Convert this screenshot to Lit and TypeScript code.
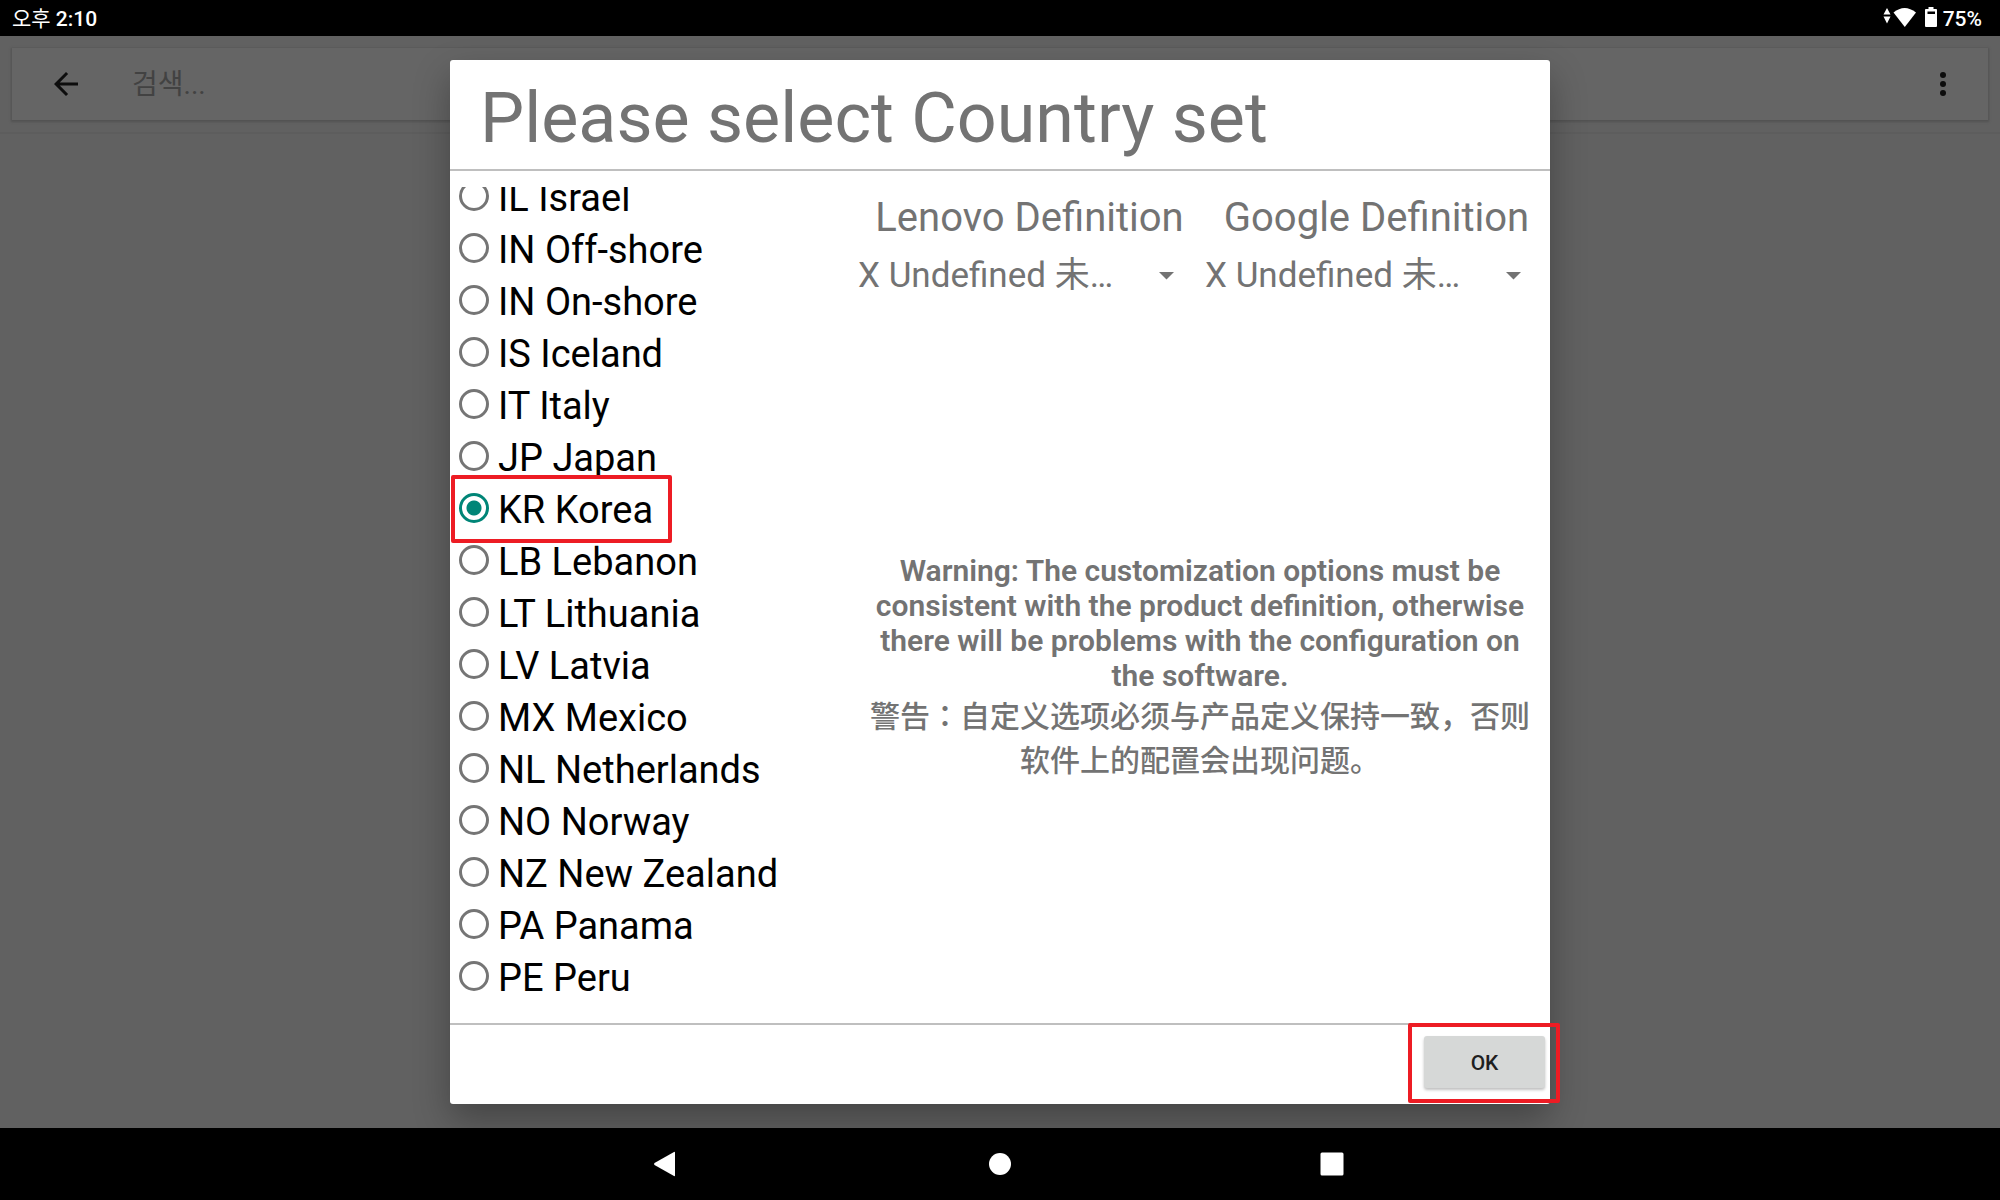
import { LitElement, html, css, svg } from "lit";
import { customElement, state } from "lit/decorators.js";

const COUNTRIES: [string, string][] = [
  ["IL", "Israel"],
  ["IN", "Off-shore"],
  ["IN", "On-shore"],
  ["IS", "Iceland"],
  ["IT", "Italy"],
  ["JP", "Japan"],
  ["KR", "Korea"],
  ["LB", "Lebanon"],
  ["LT", "Lithuania"],
  ["LV", "Latvia"],
  ["MX", "Mexico"],
  ["NL", "Netherlands"],
  ["NO", "Norway"],
  ["NZ", "New Zealand"],
  ["PA", "Panama"],
  ["PE", "Peru"],
];

@customElement("status-bar")
class StatusBar extends LitElement {
  static styles = css`
    :host {
      display: flex;
      align-items: center;
      justify-content: space-between;
      padding: 0 18px 0 12px;
      background: #000;
      color: #fff;
      font: 500 21px/34px Roboto, "Noto Sans CJK KR", sans-serif;
    }
    .clock,
    .level {
      padding-top: 2px;
    }
    .period {
      font-weight: 400;
    }
    .right {
      display: flex;
      align-items: center;
    }
    .icons {
      display: block;
    }
  `;
  render() {
    return html`
      <span class="clock"><span class="period">오후</span> 2:10</span>
      <div class="right">
        <svg class="icons" width="60" height="36" viewBox="0 0 60 36" fill="#fff" aria-hidden="true">
          ${svg`
            <path d="M0.500 14.500L4 8L7.500 14.500Z M0.500 16.500L4 23.500L7.500 16.500Z" />
            <path d="M10.500 12.500Q21.500 3.500 33 12.500L21.800 27Z" />
            <path d="M45.500 7H50.500V9H53.200Q54 9 54 10V26Q54 27 53 27H43Q42 27 42 26V10Q42 9 42.800 9H45.500Z" />
            <path fill="#000" d="M44.500 11.500H52V14H44.500Z" />
          `}
        </svg>
        <span class="level">75%</span>
      </div>
    `;
  }
}

@customElement("nav-bar")
class NavBar extends LitElement {
  static styles = css`
    :host {
      display: flex;
      justify-content: center;
      gap: 260px;
      background: #000;
    }
    .key {
      display: grid;
      place-items: center;
      width: 72px;
      padding: 0;
      border: 0;
      background: none;
    }
  `;
  render() {
    return html`
      <button class="key" aria-label="Back">
        <svg width="36" height="36" viewBox="0 0 36 36"><path fill="#fff" d="M25 6.500V29.500Q25 30.500 24 30L4.500 19Q3.500 18 4.500 17L24 6Q25 5.500 25 6.500Z" /></svg>
      </button>
      <button class="key" aria-label="Home">
        <svg width="36" height="36" viewBox="0 0 36 36"><circle cx="18" cy="18" r="11" fill="#fff" /></svg>
      </button>
      <button class="key" aria-label="Recents">
        <svg width="36" height="36" viewBox="0 0 36 36"><rect x="6.500" y="6.500" width="23" height="23" rx="1.500" fill="#fff" /></svg>
      </button>
    `;
  }
}

@customElement("search-page")
class SearchPage extends LitElement {
  static styles = css`
    :host {
      display: block;
      background: #616161;
    }
    .top {
      padding: 12px 12px;
      border-bottom: 2px solid #5d5d5d;
    }
    .card {
      display: flex;
      align-items: center;
      height: 72px;
      padding: 0 27px 0 36px;
      background: #656565;
      box-shadow: 0 1px 2px 1px #535353;
    }
    .icon {
      display: block;
      padding: 0;
      border: 0;
      background: none;
    }
    .icon svg {
      display: block;
    }
    .field {
      flex: 1;
      min-width: 0;
      margin: 0 24px 0 48px;
      padding: 2px 0 0;
      border: 0;
      outline: 0;
      background: none;
      color: #424242;
      font: 28px/36px Roboto, "Noto Sans CJK KR", sans-serif;
    }
    .field::placeholder {
      color: #424242;
      opacity: 1;
    }
  `;
  render() {
    return html`
      <div class="top">
        <div class="card">
          <button class="icon" aria-label="뒤로">
            <svg width="36" height="36" viewBox="0 0 24 24" fill="#0d0d0d"><path d="M20 11H7.830l5.590-5.590L12 4l-8 8 8 8 1.410-1.410L7.830 13H20v-2z" /></svg>
          </button>
          <input class="field" type="text" placeholder="검색..." aria-label="검색" />
          <button class="icon" aria-label="옵션 더보기">
            <svg width="36" height="36" viewBox="0 0 24 24" fill="#0d0d0d"><circle cx="12" cy="6" r="2" /><circle cx="12" cy="12" r="2" /><circle cx="12" cy="18" r="2" /></svg>
          </button>
        </div>
      </div>
    `;
  }
}

@customElement("country-dialog")
class CountryDialog extends LitElement {
  @state() private selected = 6;

  static styles = css`
    :host {
      display: grid;
      grid-template-rows: 111px minmax(0, 1fr) 81px;
      border-radius: 3px;
      background: #fff;
      color: #737373;
      font-family: Roboto, "Noto Sans CJK KR", sans-serif;
      box-shadow: 0 16px 36px rgba(0, 0, 0, 0.3);
    }
    .title {
      margin: 0;
      padding: 0 30px;
      border-bottom: 2px solid #bfbfbf;
      font-size: 70px;
      font-weight: 400;
      line-height: 116px;
      height: 109px;
    }
    .body {
      display: grid;
      grid-template-columns: 406px minmax(0, 1fr);
      min-height: 0;
      padding: 16px 0 19px;
    }
    .list {
      display: flex;
      flex-direction: column;
      justify-content: flex-end;
      overflow: hidden;
      min-height: 0;
      margin: 0;
      padding: 0;
      border: 0;
    }
    .row {
      position: relative;
      display: flex;
      flex: none;
      align-items: center;
      gap: 9px;
      padding-left: 9px;
      color: #000;
      font-size: 38px;
      line-height: 52px;
    }
    .radio {
      flex: none;
      box-sizing: border-box;
      appearance: none;
      width: 30px;
      height: 30px;
      margin: 0 0 4px;
      border: 3px solid #757575;
      border-radius: 50%;
      background: #fff;
    }
    .radio:checked {
      border-color: #008577;
      background: radial-gradient(circle, #008577 7px, #fff 8px);
    }
    .mark {
      position: absolute;
      box-sizing: border-box;
      border: 4px solid #ed1c24;
      border-radius: 2px;
      pointer-events: none;
    }
    .mark-row {
      top: -9px;
      bottom: -7px;
      left: 1px;
      width: 221px;
      z-index: 1;
    }
    .mark-ok {
      top: -13px;
      bottom: -15px;
      left: -16px;
      right: -15px;
    }
    .side {
      min-width: 0;
    }
    .defs {
      display: grid;
      grid-template-columns: 1fr 1fr;
      padding-top: 8px;
    }
    .def {
      display: grid;
      gap: 14px;
      min-width: 0;
    }
    .caption {
      text-align: center;
      font-size: 40px;
      line-height: 46px;
      white-space: nowrap;
    }
    .pick {
      position: relative;
      display: grid;
      margin-right: 24px;
    }
    .select {
      appearance: none;
      min-width: 0;
      width: 100%;
      margin: 0;
      padding: 0 62px 0 2px;
      border: 0;
      background: none;
      color: inherit;
      font: 35px/42px Roboto, "Noto Sans CJK KR", sans-serif;
      text-overflow: ellipsis;
      white-space: nowrap;
      overflow: hidden;
    }
    .caret {
      position: absolute;
      right: 5px;
      top: 17px;
      pointer-events: none;
    }
    .warning {
      margin: 256px 18px 0 12px;
      text-align: center;
      font-size: 30px;
      font-weight: 600;
    }
    .text {
      margin: 0;
      line-height: 35px;
    }
    .text-zh {
      margin: 2px 0 0;
      font-weight: 500;
      line-height: 44px;
    }
    .footer {
      display: flex;
      justify-content: flex-end;
      align-items: flex-start;
      padding: 11px 5px 0;
      border-top: 2px solid #bfbfbf;
    }
    .action {
      position: relative;
    }
    .ok {
      display: block;
      width: 121px;
      height: 52px;
      padding: 2px 0 0;
      border: 0;
      border-radius: 3px;
      background: #d6d8d7;
      color: #1f1f1f;
      font: 500 21px/50px Roboto, sans-serif;
      box-shadow: 0 2px 3px rgba(0, 0, 0, 0.25);
    }
  `;

  private picker(id: string, caption: string) {
    return html`
      <div class="def">
        <label class="caption" for=${id}>${caption}</label>
        <div class="pick">
          <select class="select" id=${id}>
            <option>X Undefined 未定义</option>
          </select>
          <svg class="caret" width="15" height="8" viewBox="0 0 15 8" aria-hidden="true"><path fill="#737373" d="M0 0H15L7.500 7.500Z" /></svg>
        </div>
      </div>
    `;
  }

  render() {
    return html`
      <h1 class="title">Please select Country set</h1>
      <div class="body">
        <fieldset class="list" aria-label="Country">
          ${COUNTRIES.map(
            ([code, name], i) => html`
              <label class="row">
                <input
                  class="radio"
                  type="radio"
                  name="country"
                  .checked=${i === this.selected}
                  @change=${() => (this.selected = i)}
                />
                <span>${code} ${name}</span>
                ${i === 6 ? html`<span class="mark mark-row"></span>` : null}
              </label>
            `,
          )}
        </fieldset>
        <div class="side">
          <div class="defs">
            ${this.picker("lenovo", "Lenovo Definition")} ${this.picker("google", "Google Definition")}
          </div>
          <div class="warning">
            <p class="text">
              Warning: The customization options must be consistent with the product definition, otherwise
              there will be problems with the configuration on the software.
            </p>
            <p class="text-zh">警告：自定义选项必须与产品定义保持一致，否则软件上的配置会出现问题。</p>
          </div>
        </div>
      </div>
      <div class="footer">
        <div class="action">
          <button class="ok">OK</button>
          <span class="mark mark-ok"></span>
        </div>
      </div>
    `;
  }
}

@customElement("app-root")
class AppRoot extends LitElement {
  static styles = css`
    :host {
      display: grid;
      grid-template-rows: 36px minmax(0, 1fr) 72px;
      height: 100vh;
    }
    .stage {
      position: relative;
      display: grid;
      overflow: hidden;
    }
    .dialog {
      position: absolute;
      inset: 24px 22.5%;
    }
  `;
  render() {
    return html`
      <status-bar></status-bar>
      <main class="stage">
        <search-page></search-page>
        <country-dialog class="dialog" role="dialog" aria-label="Please select Country set"></country-dialog>
      </main>
      <nav-bar></nav-bar>
    `;
  }
}
